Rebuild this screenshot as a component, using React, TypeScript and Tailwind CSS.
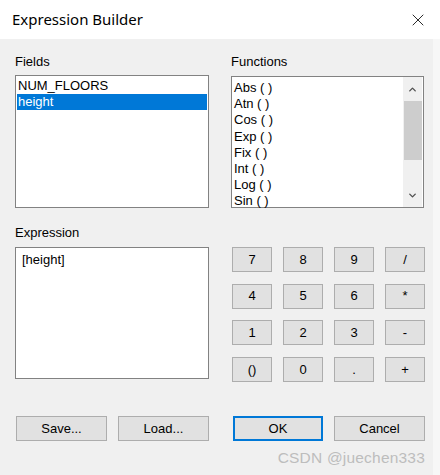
import { X, ChevronUp, ChevronDown } from 'lucide-react';

const FIELDS = ['NUM_FLOORS', 'height'];
const FUNCTIONS = ['Abs ( )', 'Atn ( )', 'Cos ( )', 'Exp ( )', 'Fix ( )', 'Int ( )', 'Log ( )', 'Sin ( )'];
const KEYS = [
  ['7', '8', '9', '/'],
  ['4', '5', '6', '*'],
  ['1', '2', '3', '-'],
  ['()', '0', '.', '+'],
];

const ui = { fontFamily: '"Liberation Sans", Arial, sans-serif' };

function WinButton({ label, primary = false, className = '' }: { label: string; primary?: boolean; className?: string }) {
  return (
    <button
      className={
        'h-[25px] bg-[#e1e1e1] text-[13px] text-black flex items-center justify-center ' +
        (primary ? 'border-2 border-[#0078d7] ' : 'border border-[#adadad] ') +
        className
      }
    >
      {label}
    </button>
  );
}

export default function App() {
  return (
    <div className="w-[440px] h-[475px] flex flex-col bg-white overflow-hidden" style={ui}>
      {/* title bar */}
      <div className="h-[39px] flex items-center justify-between pl-3 pr-[12px] bg-white">
        <span className="text-[15px] text-black" style={{ fontFamily: '"Noto Sans", "Open Sans", sans-serif' }}>
          Expression Builder
        </span>
        <X className="w-[20px] h-[20px] text-black" strokeWidth={1} />
      </div>

      <div className="flex flex-1">
        <div className="w-[433px] bg-[#f0f0f0] pt-[15px] pl-[15px] flex flex-col">
          <div className="flex gap-[22px]">
            {/* left column */}
            <div className="w-[194px] flex flex-col">
              <div className="h-[16px] text-[13px] leading-[16px] text-black">Fields</div>
              <div className="mt-[5px] h-[133px] border border-[#828282] bg-white pt-[2px] px-[1px]">
                {FIELDS.map((f) => (
                  <div
                    key={f}
                    className={
                      'h-[16px] leading-[16px] text-[13px] pl-[1px] ' +
                      (f === 'height' ? 'bg-[#0078d7] text-white' : 'text-black')
                    }
                  >
                    {f}
                  </div>
                ))}
              </div>

              <div className="mt-[17px] h-[16px] text-[13px] leading-[16px] text-black">Expression</div>
              <div className="mt-[6px] h-[132px] border border-[#828282] bg-white pt-[4px] pl-[6px] text-[13px] leading-[16px] text-black">
                [height]
              </div>
            </div>

            {/* right column */}
            <div className="w-[193px] flex flex-col">
              <div className="h-[16px] text-[13px] leading-[16px] text-black">Functions</div>
              <div className="mt-[6px] h-[132px] border border-[#828282] bg-white flex">
                <div className="flex-1 pt-[3px] pl-[2px]">
                  {FUNCTIONS.map((f) => (
                    <div key={f} className="h-[16.2px] leading-[16px] text-[13px] text-black">
                      {f}
                    </div>
                  ))}
                </div>
                <div className="w-[19px] mr-[1px] bg-[#f0f0f0] flex flex-col items-center">
                  <div className="h-[24px] flex items-center justify-center">
                    <ChevronUp className="w-[11px] h-[11px] text-[#505050]" strokeWidth={3} />
                  </div>
                  <div className="w-[18px] h-[59px] bg-[#cdcdcd]" />
                  <div className="flex-1" />
                  <div className="h-[24px] flex items-center justify-center">
                    <ChevronDown className="w-[11px] h-[11px] text-[#505050]" strokeWidth={3} />
                  </div>
                </div>
              </div>

              <div className="mt-[39px] ml-px h-[135px] w-[193px] flex flex-col justify-between">
                {KEYS.map((row, i) => (
                  <div key={i} className="flex justify-between">
                    {row.map((k) => (
                      <WinButton key={k} label={k} className="w-[40px]" />
                    ))}
                  </div>
                ))}
              </div>
            </div>
          </div>

          {/* bottom buttons */}
          <div className="mt-[34px] flex pl-px">
            <WinButton label="Save..." className="w-[91px]" />
            <WinButton label="Load..." className="w-[91px] ml-[11px]" />
            <WinButton label="OK" primary className="w-[90px] ml-[24px]" />
            <WinButton label="Cancel" className="w-[91px] ml-[11px]" />
          </div>
          <div className="mt-[7px] pr-[8px] text-right text-[15.5px] leading-[20px] text-[#bdbdbd] tracking-[0.2px]">
            CSDN @juechen333
          </div>
        </div>
        <div className="flex-1 bg-[#f7f7f7]" />
      </div>
    </div>
  );
}
